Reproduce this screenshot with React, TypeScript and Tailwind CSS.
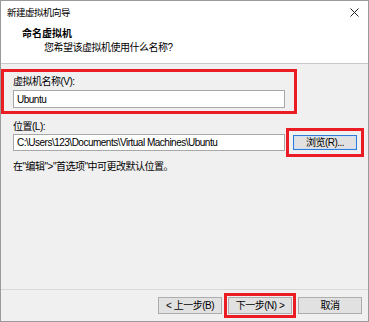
import React from "react";

const font = { fontFamily: '"Liberation Sans", "Noto Sans CJK SC", sans-serif' };

export default function App() {
  return (
    <div
      className="w-[369px] h-[322px] bg-[#f0f0f0] border border-[#9a9a9a] flex flex-col text-[10px] tracking-[-0.5px] text-black overflow-hidden"
      style={font}
    >
      {/* title + header */}
      <div className="bg-white h-[63px] border-b border-[#c8c8c8] flex flex-col">
        <div className="h-[23px] flex items-center justify-between pl-[6px] pr-[9px]">
          <span className="text-[9.5px] leading-none">新建虚拟机向导</span>
          <svg width="9" height="9" viewBox="0 0 9 9">
            <path d="M0.5 0.5 L8.5 8.5 M8.5 0.5 L0.5 8.5" stroke="#222" strokeWidth="1" />
          </svg>
        </div>
        <div className="pl-[21px] pt-[3px] font-bold leading-[14px] tracking-normal">命名虚拟机</div>
        <div className="pl-[43px] leading-[14px]">您希望该虚拟机使用什么名称?</div>
      </div>

      <div className="flex flex-col pt-[5px]">
        {/* name group */}
        <div className="w-[296px] border-[3px] border-[#ec1c24] pl-[9px] pt-[2px] pb-[3px]">
          <div className="leading-[15px]">虚拟机名称(V):</div>
          <div className="mt-[1px] w-[272px] h-[18px] bg-white border border-[#a8a8a8] flex items-center px-[3px]">
            Ubuntu
          </div>
        </div>

        {/* location */}
        <div className="pl-[12px] mt-[5px] leading-[15px]">位置(L):</div>
        <div className="flex items-center">
          <div className="ml-[12px] w-[272px] h-[17px] bg-white border border-[#a8a8a8] flex items-center px-[3px] whitespace-nowrap">
            C:\Users\123\Documents\Virtual Machines\Ubuntu
          </div>
          <div className="ml-[1px] border-[3px] border-[#ec1c24] px-[4px] py-[4px] my-[-6px]">
            <div className="w-[64px] h-[15px] border border-[#2b7bd8] bg-[#e1e1e1] flex items-center justify-center">
              <div className="w-[62px] h-[13px] border border-[#cfe0f5] flex items-center justify-center leading-none whitespace-nowrap">
                浏览(R)...
              </div>
            </div>
          </div>
        </div>
        <div className="pl-[12px] mt-[8px] leading-[15px]">在"编辑"&gt;"首选项"中可更改默认位置。</div>
      </div>

      <div className="flex-1" />

      {/* footer */}
      <div className="h-[32px] border-t border-[#d9d9d9] flex items-center justify-end pr-[6px]">
        <div className="w-[64px] h-[17px] border border-[#adadad] bg-[#e1e1e1] flex items-center justify-center leading-none whitespace-nowrap">
          &lt; 上一步(B)
        </div>
        <div className="ml-[2px] border-[3px] border-[#ec1c24] p-[1px]">
          <div className="w-[64px] h-[17px] border border-[#adadad] bg-[#e1e1e1] flex items-center justify-center leading-none whitespace-nowrap">
            下一步(N) &gt;
          </div>
        </div>
        <div className="ml-[2px] w-[64px] h-[17px] border border-[#adadad] bg-[#e1e1e1] flex items-center justify-center leading-none">
          取消
        </div>
      </div>
    </div>
  );
}
